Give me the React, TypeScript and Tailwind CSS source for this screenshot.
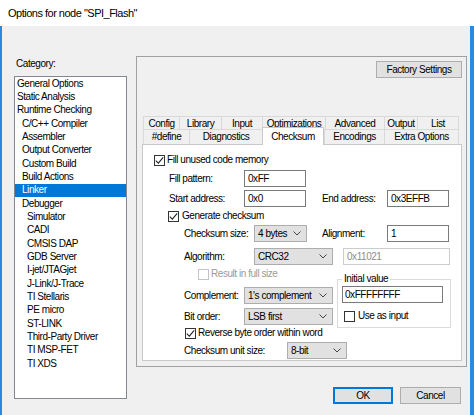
import React from "react";

const cats: [string, number][] = [
  ["General Options", 0],
  ["Static Analysis", 0],
  ["Runtime Checking", 0],
  ["C/C++ Compiler", 1],
  ["Assembler", 1],
  ["Output Converter", 1],
  ["Custom Build", 1],
  ["Build Actions", 1],
  ["Linker", 1],
  ["Debugger", 1],
  ["Simulator", 2],
  ["CADI", 2],
  ["CMSIS DAP", 2],
  ["GDB Server", 2],
  ["I-jet/JTAGjet", 2],
  ["J-Link/J-Trace", 2],
  ["TI Stellaris", 2],
  ["PE micro", 2],
  ["ST-LINK", 2],
  ["Third-Party Driver", 2],
  ["TI MSP-FET", 2],
  ["TI XDS", 2],
];

const indent = ["pl-[2px]", "pl-[7px]", "pl-[12px]"];

const row1: [string, string][] = [
  ["Config", "w-[36px]"],
  ["Library", "w-[42px]"],
  ["Input", "w-[41px]"],
  ["Optimizations", "w-[63px]"],
  ["Advanced", "w-[59px]"],
  ["Output", "w-[33px]"],
  ["List", "w-[42px]"],
];

const row2: [string, string][] = [
  ["#define", "w-[46px]"],
  ["Diagnostics", "w-[73px]"],
  ["Checksum", "w-[62px]"],
  ["Encodings", "w-[60px]"],
  ["Extra Options", "w-[75px]"],
];

function Check({ checked = false, disabled = false }: { checked?: boolean; disabled?: boolean }) {
  return (
    <span
      className={
        disabled
          ? "flex h-[11px] w-[11px] shrink-0 items-center justify-center border border-[#c4c4c4] bg-white"
          : "flex h-[11px] w-[11px] shrink-0 items-center justify-center border border-[#333333] bg-white"
      }
    >
      {checked && (
        <svg width="9" height="9" viewBox="0 0 9 9">
          <polyline points="0.8,4.6 3.3,7.1 8.2,1.4" fill="none" stroke="#222222" strokeWidth="1.1" />
        </svg>
      )}
    </span>
  );
}

function Chevron() {
  return (
    <svg width="8" height="5" viewBox="0 0 8 5" className="shrink-0">
      <polyline points="0.5,0.5 4,4 7.5,0.5" fill="none" stroke="#444444" strokeWidth="1" />
    </svg>
  );
}

function Combo({ w, text }: { w: string; text: string }) {
  return (
    <div className={`${w} flex h-[17px] items-center justify-between border border-[#adadad] bg-[#e1e1e1] pl-[3px] pr-[5px]`}>
      <span>{text}</span>
      <Chevron />
    </div>
  );
}

function Field({ w, text }: { w: string; text: string }) {
  return (
    <div className={`${w} flex h-[17px] items-center border border-[#7a7a7a] bg-white pl-[3px]`}>
      {text}
    </div>
  );
}

export default function App() {
  return (
    <div className="flex h-[415px] w-[474px] flex-col overflow-hidden whitespace-nowrap bg-[#f0f0f0] font-['Liberation_Sans',Arial,sans-serif] text-[10px] leading-[12px] tracking-[-0.45px] text-black">
      <div className="flex h-[26px] shrink-0 items-center bg-white pl-[8px] text-[11px] tracking-[-0.5px]">
        Options for node "SPI_Flash"
      </div>
      <div className="flex h-[389px] border-l-2 border-r-4 border-[#2a8ae0]">
        <div className="mr-[9px] flex w-[125px] flex-col pl-[12px]">
          <div className="ml-[2px] mt-[32px] h-[12px]">Category:</div>
          <div className="mt-[6px] h-[323px] w-[113px] border border-[#828790] bg-white">
            {cats.map(([name, lvl]) => (
              <div
                key={name}
                className={
                  name === "Linker"
                    ? `flex h-[13.33px] items-center bg-[#0078d7] text-white ${indent[lvl]}`
                    : `flex h-[13.33px] items-center ${indent[lvl]}`
                }
              >
                {name}
              </div>
            ))}
          </div>
        </div>
        <div className="flex w-[331px] flex-col">
          <div className="mt-[30px] flex h-[311px] flex-col border border-[#a0a0a0]">
            <div className="flex justify-end pr-[4px] pt-[4px]">
              <div className="flex h-[17px] w-[86px] items-center justify-center border border-[#adadad] bg-[#e1e1e1]">
                Factory Settings
              </div>
            </div>
            <div className="ml-[6px] mt-[38px] flex h-[14px]">
              {row1.map(([t, w], i) => (
                <div
                  key={t}
                  className={
                    i === row1.length - 1
                      ? `${w} flex items-center justify-center border-x border-t border-[#d9d9d9]`
                      : `${w} flex items-center justify-center border-l border-t border-[#d9d9d9]`
                  }
                >
                  {t}
                </div>
              ))}
            </div>
            <div className="-mt-[1px] ml-[6px] flex h-[15px] items-end">
              {row2.map(([t, w], i) =>
                t === "Checksum" ? (
                  <div
                    key={t}
                    className={`${w} relative z-10 -mb-[1px] flex h-[18px] items-center justify-center border-x border-t border-[#c9c9c9] bg-white`}
                  >
                    {t}
                  </div>
                ) : (
                  <div
                    key={t}
                    className={
                      i === row2.length - 1
                        ? `${w} flex h-[15px] items-center justify-center border-x border-t border-[#d9d9d9]`
                        : `${w} flex h-[15px] items-center justify-center border-l border-t border-[#d9d9d9]`
                    }
                  >
                    {t}
                  </div>
                )
              )}
            </div>
            <div className="ml-[5px] flex h-[217px] w-[320px] flex-col border border-[#c9c9c9] bg-white">
              <div className="ml-[11px] mt-[8px] flex h-[14px] items-center gap-[2px]">
                <Check checked />
                <span>Fill unused code memory</span>
              </div>
              <div className="ml-[26px] mt-[3px] flex h-[17px] items-center">
                <span className="w-[75px]">Fill pattern:</span>
                <Field w="w-[62px]" text="0xFF" />
              </div>
              <div className="ml-[26px] mt-[3px] flex h-[17px] items-center">
                <span className="w-[75px]">Start address:</span>
                <Field w="w-[62px]" text="0x0" />
                <span className="ml-[16px] w-[65px]">End address:</span>
                <Field w="w-[62px]" text="0x3EFFB" />
              </div>
              <div className="ml-[25px] mt-[2px] flex h-[14px] items-center gap-[3px]">
                <Check checked />
                <span>Generate checksum</span>
              </div>
              <div className="ml-[41px] mt-[2px] flex h-[17px] items-center">
                <span className="w-[70px]">Checksum size:</span>
                <Combo w="w-[53px]" text="4 bytes" />
                <span className="ml-[15px] w-[65px]">Alignment:</span>
                <Field w="w-[62px]" text="1" />
              </div>
              <div className="ml-[41px] mt-[6px] flex h-[17px] items-center">
                <span className="w-[70px]">Algorithm:</span>
                <Combo w="w-[79px]" text="CRC32" />
                <div className="ml-[10px] flex h-[17px] w-[107px] items-center border border-[#cccccc] bg-white pl-[3px] text-[#8d8d8d]">
                  0x11021
                </div>
              </div>
              <div className="flex">
                <div className="flex w-[194px] flex-col">
                  <div className="ml-[55px] mt-[2px] flex h-[14px] items-center gap-[2px] text-[#9a9a9a]">
                    <Check disabled />
                    <span>Result in full size</span>
                  </div>
                  <div className="ml-[41px] mt-[6px] flex h-[17px] items-center">
                    <span className="w-[60px]">Complement:</span>
                    <Combo w="w-[89px]" text="1's complement" />
                  </div>
                  <div className="ml-[41px] mt-[4px] flex h-[17px] items-center">
                    <span className="w-[60px]">Bit order:</span>
                    <Combo w="w-[89px]" text="LSB first" />
                  </div>
                </div>
                <fieldset className="mt-[8px] w-[114px] border border-[#dcdcdc] pb-[4px]">
                  <legend className="ml-[4px] px-[2px] leading-[12px]">Initial value</legend>
                  <div className="ml-[4px] mt-[1px] flex h-[17px] w-[101px] items-center border border-[#7a7a7a] bg-white pl-[2px]">
                    0xFFFFFFFF
                  </div>
                  <div className="ml-[6px] mt-[6px] flex h-[14px] items-center gap-[3px]">
                    <Check />
                    <span>Use as input</span>
                  </div>
                </fieldset>
              </div>
              <div className="-mt-[2px] ml-[42px] flex h-[14px] items-center gap-[2px]">
                <Check checked />
                <span>Reverse byte order within word</span>
              </div>
              <div className="ml-[41px] mt-[2px] flex h-[17px] items-center">
                <span className="w-[103px]">Checksum unit size:</span>
                <Combo w="w-[60px]" text="8-bit" />
              </div>
            </div>
          </div>
          <div className="mt-[20px] flex justify-end gap-[7px] pr-[6px]">
            <div className="flex h-[17px] w-[60px] items-center justify-center border-2 border-[#0078d7] bg-[#e1e1e1]">
              OK
            </div>
            <div className="flex h-[17px] w-[61px] items-center justify-center border border-[#adadad] bg-[#e1e1e1]">
              Cancel
            </div>
          </div>
        </div>
      </div>
    </div>
  );
}
